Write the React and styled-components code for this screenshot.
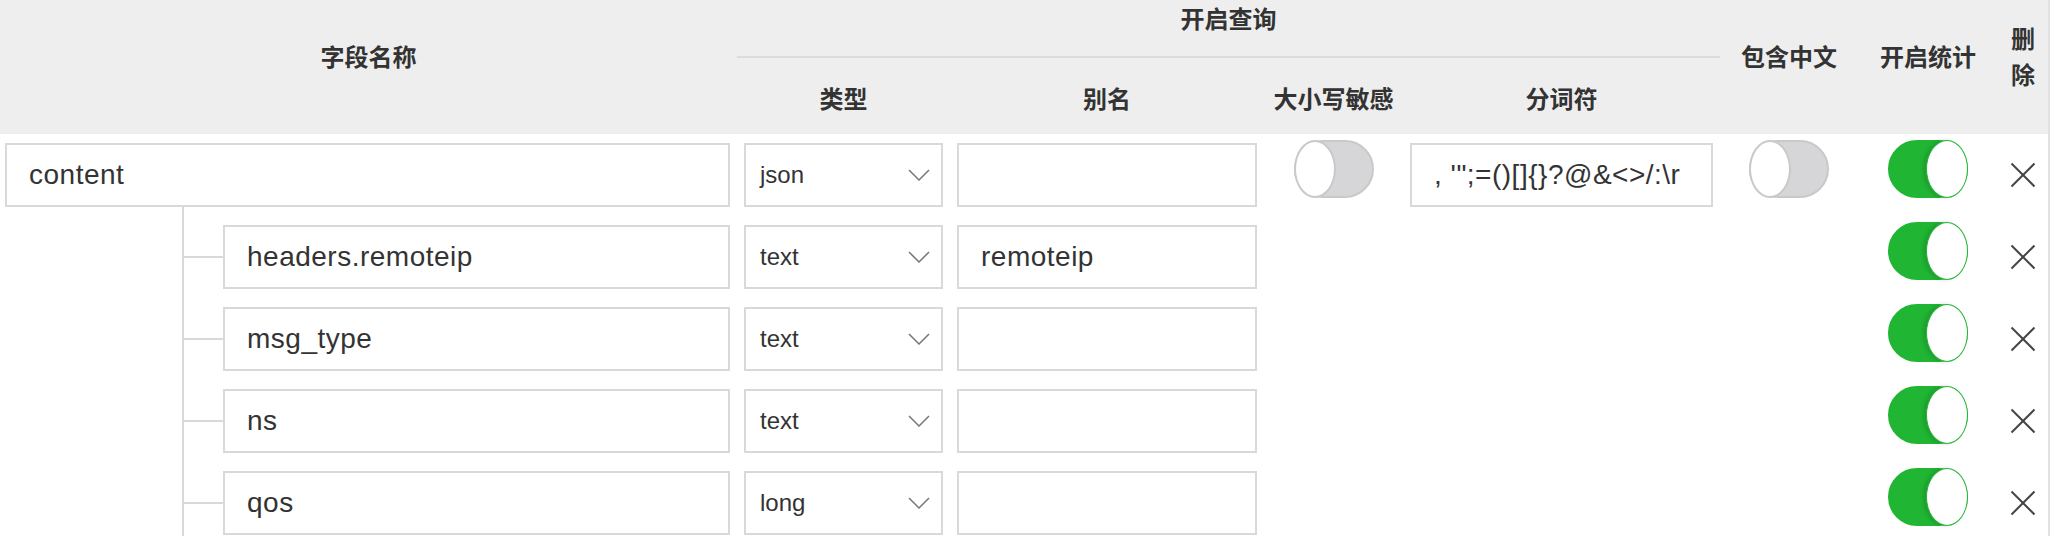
import React from "react";
import styled, { createGlobalStyle } from "styled-components";

const COLS = "737px 213px 314px 139px 317px 138px 140px 50px";

const GlobalStyle = createGlobalStyle`
  html, body {
    margin: 0;
    padding: 0;
    background: #fff;
    height: 536px;
    overflow: hidden;
  }
  body {
    font-family: "Liberation Sans", "Noto Sans CJK SC", sans-serif;
    color: #333;
  }
`;

const Table = styled.div`
  width: 2048px;
  border-right: 2px solid #e2e2e2;
  min-height: 536px;
`;

const Header = styled.div`
  display: grid;
  grid-template-columns: ${COLS};
  grid-template-rows: 58px 76px;
  background: #eeeeee;
  font-family: "Noto Sans CJK SC", sans-serif;
  font-size: 24px;
  font-weight: 600;
  color: #333;
`;

const SpanHead = styled.div`
  grid-row: 1 / span 2;
  grid-column: ${(p) => p.$col};
  display: flex;
  align-items: center;
  justify-content: center;
  text-align: center;
  line-height: 36px;
  padding: 0 ${(p) => p.$padX || 0}px 22px;
`;

const GroupHead = styled.div`
  grid-row: 1;
  grid-column: 2 / span 4;
  display: flex;
  justify-content: center;
  align-items: flex-start;
  line-height: 36px;
  border-bottom: 2px solid #dcdcdc;
`;

const SubHead = styled.div`
  grid-row: 2;
  grid-column: ${(p) => p.$col};
  display: flex;
  align-items: center;
  justify-content: center;
  line-height: 36px;
  padding-top: 3px;
`;

const Row = styled.div`
  display: grid;
  grid-template-columns: ${COLS};
  height: 82px;
  align-items: center;
`;

const Cell = styled.div`
  height: 100%;
  box-sizing: border-box;
  display: flex;
  align-items: center;
  justify-content: ${(p) => (p.$center ? "center" : "stretch")};
  padding: 0 7px;
`;

const FieldCell = styled(Cell)`
  position: relative;
  padding-left: ${(p) => (p.$child ? 223 : 5)}px;

  ${(p) =>
    p.$child &&
    `
    &::before {
      content: "";
      position: absolute;
      left: 182px;
      top: ${p.$first ? -10 : -41}px;
      bottom: ${p.$more ? 0 : 40}px;
      width: 2px;
      background: #d9d9d9;
    }
    &::after {
      content: "";
      position: absolute;
      left: 182px;
      top: 40px;
      width: 41px;
      height: 2px;
      background: #d9d9d9;
    }
  `}
`;

const TextInput = styled.input`
  width: 100%;
  height: 64px;
  box-sizing: border-box;
  border: 2px solid #d9d9d9;
  border-radius: 0;
  background: #fff;
  outline: none;
  padding: 0 22px;
  font-family: "Liberation Sans", sans-serif;
  font-size: 28px;
  letter-spacing: 0.5px;
  color: #333;
`;

const SelectBox = styled.div`
  width: 100%;
  height: 64px;
  box-sizing: border-box;
  border: 2px solid #d9d9d9;
  background: #fff;
  display: flex;
  align-items: center;
  justify-content: space-between;
  padding: 0 11px 0 14px;
  font-family: "Liberation Sans", sans-serif;
  font-size: 24px;
  color: #333;
`;

const Chevron = styled.svg`
  width: 22px;
  height: 12px;
  flex: none;
`;

const Track = styled.div`
  position: relative;
  align-self: flex-start;
  margin-top: 6px;
  width: 80px;
  height: 58px;
  box-sizing: border-box;
  border-radius: 29px;
  background: ${(p) => (p.$on ? "#21b534" : "#d6d6d8")};
  border: 2px solid ${(p) => (p.$on ? "#21b534" : "#c9c9c9")};
`;

const Knob = styled.div`
  position: absolute;
  top: -2px;
  ${(p) => (p.$on ? "right: -2px;" : "left: -2px;")}
  width: 42px;
  height: 58px;
  box-sizing: border-box;
  border-radius: 50%;
  background: #fff;
  border: ${(p) => (p.$on ? "1.5px solid #21b534" : "2px solid #c9c9c9")};
  box-shadow: ${(p) => (p.$on ? "-3px 0 4px rgba(0,0,0,0.14)" : "none")};
`;

const DeleteBtn = styled.button`
  border: none;
  background: transparent;
  padding: 0;
  width: 26px;
  height: 26px;
  display: flex;
  align-items: center;
  justify-content: center;
  cursor: pointer;
`;

const Toggle = ({ on }) => (
  <Track $on={on}>
    <Knob $on={on} />
  </Track>
);

const Select = ({ value }) => (
  <SelectBox>
    <span>{value}</span>
    <Chevron viewBox="0 0 22 12">
      <polyline points="1,1 11,11 21,1" fill="none" stroke="#777" strokeWidth="1.5" />
    </Chevron>
  </SelectBox>
);

const CloseIcon = () => (
  <svg width="26" height="26" viewBox="0 0 26 26">
    <line x1="1.5" y1="1.5" x2="24.5" y2="24.5" stroke="#444" strokeWidth="2" />
    <line x1="24.5" y1="1.5" x2="1.5" y2="24.5" stroke="#444" strokeWidth="2" />
  </svg>
);

const SEP = ", '\";=()[]{}?@&<>/:\\r";

const fields = [
  { name: "content", type: "json", alias: "", parent: true, caseSensitive: false, sep: SEP, chinese: false, stat: true },
  { name: "headers.remoteip", type: "text", alias: "remoteip", stat: true },
  { name: "msg_type", type: "text", alias: "", stat: true },
  { name: "ns", type: "text", alias: "", stat: true },
  { name: "qos", type: "long", alias: "", stat: true, more: true },
];

export default function App() {
  let childIndex = 0;
  return (
    <>
      <GlobalStyle />
      <Table>
        <Header>
          <SpanHead $col={1}>字段名称</SpanHead>
          <GroupHead>开启查询</GroupHead>
          <SubHead $col={2}>类型</SubHead>
          <SubHead $col={3}>别名</SubHead>
          <SubHead $col={4}>大小写敏感</SubHead>
          <SubHead $col={5}>分词符</SubHead>
          <SpanHead $col={6}>包含中文</SpanHead>
          <SpanHead $col={7}>开启统计</SpanHead>
          <SpanHead $col={8} $padX={13}>删除</SpanHead>
        </Header>
        {fields.map((f) => {
          const child = !f.parent;
          const first = child && childIndex === 0;
          if (child) childIndex += 1;
          return (
            <Row key={f.name}>
              <FieldCell $child={child} $first={first} $more={f.more}>
                <TextInput readOnly value={f.name} />
              </FieldCell>
              <Cell>
                <Select value={f.type} />
              </Cell>
              <Cell>
                <TextInput readOnly value={f.alias} />
              </Cell>
              <Cell $center>{f.parent && <Toggle on={f.caseSensitive} />}</Cell>
              <Cell>{f.parent && <TextInput readOnly value={f.sep} />}</Cell>
              <Cell $center>{f.parent && <Toggle on={f.chinese} />}</Cell>
              <Cell $center>
                <Toggle on={f.stat} />
              </Cell>
              <Cell $center>
                <DeleteBtn aria-label="删除">
                  <CloseIcon />
                </DeleteBtn>
              </Cell>
            </Row>
          );
        })}
      </Table>
    </>
  );
}
